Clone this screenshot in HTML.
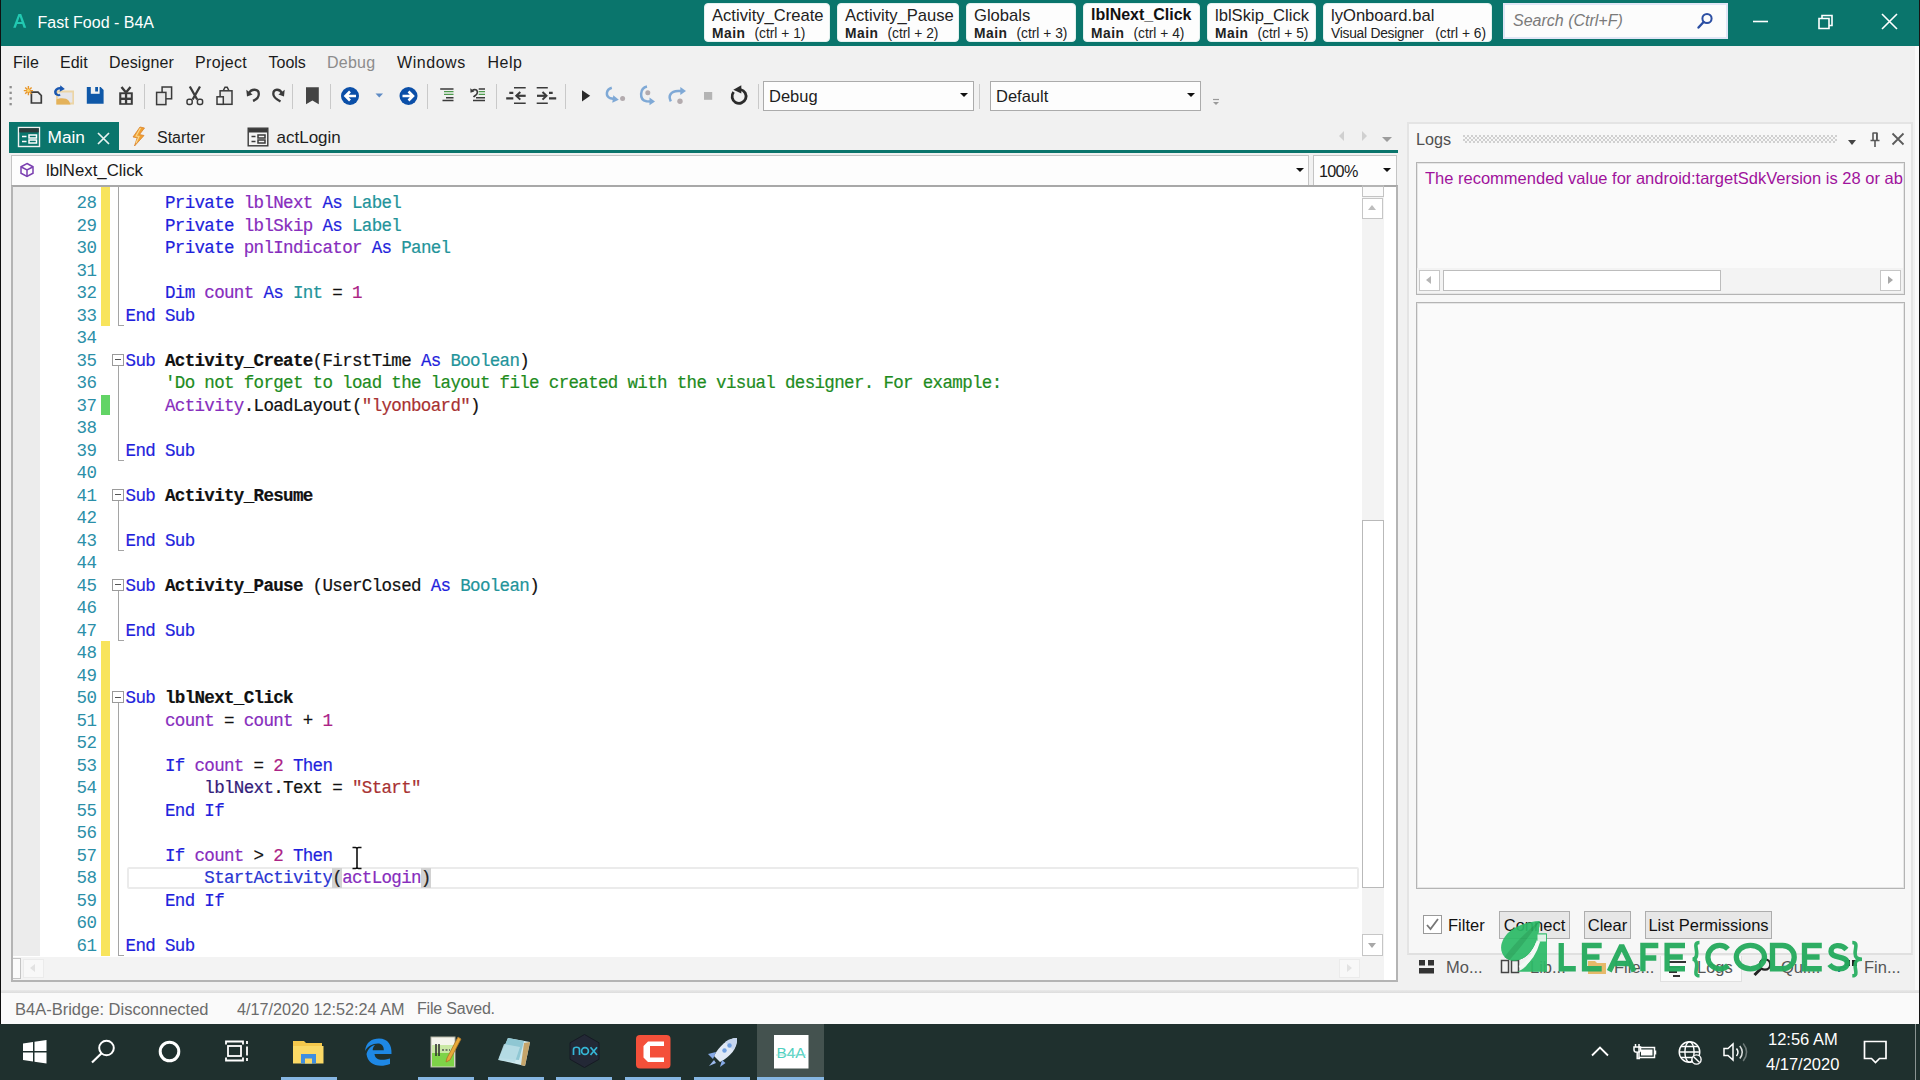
<!DOCTYPE html>
<html><head><meta charset="utf-8">
<style>
*{box-sizing:border-box;margin:0;padding:0}
html,body{width:1920px;height:1080px;overflow:hidden;background:#f1f1f1;font-family:"Liberation Sans",sans-serif;color:#1e1e1e}
.abs{position:absolute}
#win{position:absolute;left:0;top:0;width:1920px;height:1024px;background:#f1f1f1;overflow:hidden}
#title{position:absolute;left:0;top:0;width:1920px;height:46px;background:#0a756c}
#title .ttl{position:absolute;left:37.5px;top:13.5px;font-size:16px;color:#fff;white-space:nowrap}
.qt{position:absolute;top:3px;height:39px;background:#fdfdfd;border-radius:4px;border:1px solid #e4f1ef;white-space:nowrap;overflow:hidden}
.qt .a{position:absolute;left:7px;top:1.5px;font-size:16.6px;color:#222}
.qt .b{position:absolute;left:7px;top:21.5px;font-size:13.8px;color:#222}
.qt .b b{font-weight:bold;margin-right:9px;letter-spacing:0.5px}
.qt.sel .a{font-weight:bold;color:#111;font-size:16px}
#search{position:absolute;left:1503px;top:3px;width:225px;height:36px;background:#fcfcfc;border:2px solid #e1e6f6}
#search span{position:absolute;left:8px;top:7px;font-size:16px;font-style:italic;color:#7a7a7a;white-space:nowrap}
#menu span{position:absolute;top:53.5px;font-size:16px;color:#1b1b1b;white-space:nowrap}
.tb{position:absolute}
.tab{position:absolute;top:123px;height:20px;line-height:20px;font-size:16.5px;white-space:nowrap}
.combo{position:absolute;background:#fdfdfd;border:1px solid #ababab;font-size:16.5px;white-space:nowrap}
.arr{position:absolute;width:0;height:0;border-left:4px solid transparent;border-right:4px solid transparent;border-top:4.5px solid #111}
#code{-webkit-text-stroke:0.2px;position:absolute;left:125.6px;top:192.35px;font-family:"Liberation Mono",monospace;font-size:17.5px;letter-spacing:-0.66px;line-height:22.5px;white-space:pre;color:#111}
#code div{height:22.5px}
#lnum{position:absolute;left:40px;width:56.3px;top:192.35px;font-family:"Liberation Mono",monospace;font-size:17.5px;letter-spacing:-0.66px;line-height:22.5px;text-align:right;color:#2b8fa8}
#lnum div{height:22.5px}
.k{color:#1f1fdc}.t{color:#23949a}.v{color:#872dbd}.n{color:#ab2386}.s{color:#a83232}.c{color:#1e8c1e}.sb{font-weight:bold;color:#111}.d{color:#33207a}.k2{color:#2a36d2}.br{background:#d2d2d2;color:#222}
.fold{position:absolute;left:112px;width:12px;height:12px;border:1px solid #9a9a9a;background:#fff}
.fold:after{content:"";position:absolute;left:2px;top:4.5px;width:6px;height:1px;background:#555}
.fl{position:absolute;left:118px;width:1px;background:#a5a5a5}
.fh{position:absolute;left:118px;width:6px;height:1px;background:#a5a5a5}
.btn{position:absolute;top:910.5px;height:28px;border:1px solid #adadad;background:#e7e7e7;font-size:16.5px;white-space:nowrap;text-align:center;line-height:26.5px;color:#111}
#task{position:absolute;left:0;top:1024px;width:1920px;height:56px;background:#1f302e}
.ul{position:absolute;top:53px;height:3px;background:#86b6e2}
</style></head><body>
<div id="win">
<!-- TITLE -->
<div id="title">
 <svg class="abs" style="left:12px;top:13px" width="16" height="16" viewBox="0 0 16 16"><path d="M1.2 14.7 L6.4 1 L9.2 1 L14.2 14.7 L11.6 14.7 L10.3 10.9 L5.1 10.9 L3.8 14.7 Z M5.8 8.9 L9.6 8.9 L7.7 3.4 Z" fill="#22c9b2"/></svg>
 <div class="ttl">Fast Food - B4A</div>
 <div class="qt" style="left:704px;width:126px"><div class="a">Activity_Create</div><div class="b"><b>Main</b>(ctrl + 1)</div></div>
 <div class="qt" style="left:837px;width:122px"><div class="a">Activity_Pause</div><div class="b"><b>Main</b>(ctrl + 2)</div></div>
 <div class="qt" style="left:966px;width:110px"><div class="a">Globals</div><div class="b"><b>Main</b>(ctrl + 3)</div></div>
 <div class="qt sel" style="left:1083px;width:117px"><div class="a">lblNext_Click</div><div class="b"><b>Main</b>(ctrl + 4)</div></div>
 <div class="qt" style="left:1207px;width:109px"><div class="a">lblSkip_Click</div><div class="b"><b>Main</b>(ctrl + 5)</div></div>
 <div class="qt" style="left:1323px;width:169px"><div class="a">lyOnboard.bal</div><div class="b"><span style="letter-spacing:-0.25px">Visual Designer</span>&nbsp; &nbsp;(ctrl + 6)</div></div>
 <div id="search"><span>Search (Ctrl+F)</span>
  <svg class="abs" style="left:190px;top:6px" width="20" height="20" viewBox="0 0 20 20"><circle cx="12" cy="7.5" r="4.6" fill="none" stroke="#2c4fa3" stroke-width="2"/><path d="M8.6 11 L3.5 16.5" stroke="#2c4fa3" stroke-width="2.4" stroke-linecap="round"/></svg>
 </div>
 <svg class="abs" style="left:1740px;top:0" width="180" height="46" viewBox="0 0 180 46"><g stroke="#fff" stroke-width="1.6" fill="none"><path d="M13 21.5 H28"/><path d="M79 18.5 H89 V28.5 H79 Z"/><path d="M82 18.5 V15.5 H92 V25.5 H89"/><path d="M142 14 L157 29 M157 14 L142 29"/></g></svg>
</div>
<!-- MENU -->
<div id="menu">
 <span style="left:13px">File</span><span style="left:60px">Edit</span><span style="left:109px;letter-spacing:0.1px">Designer</span><span style="left:195px;letter-spacing:0.33px">Project</span><span style="left:268.500px">Tools</span><span style="left:327px;color:#8c8c8c;letter-spacing:0.25px">Debug</span><span style="left:397px;letter-spacing:0.55px">Windows</span><span style="left:487.500px;letter-spacing:0.5px">Help</span>
</div>
<div id="toolbar">
<svg class="abs" style="left:0;top:78px" width="1240" height="40" viewBox="0 78 1240 40">
 <g fill="#8f8f8f"><rect x="9.500" y="86" width="2.300" height="2.300"/><rect x="9.500" y="91.700" width="2.300" height="2.300"/><rect x="9.500" y="97.300" width="2.300" height="2.300"/><rect x="9.500" y="103" width="2.300" height="2.300"/></g>
 <g stroke="#c9c9c9" stroke-width="1"><path d="M144.5 84V109M292.5 84V109M330.5 84V109M427.5 84V109M496.5 84V109M565.5 84V109M758.5 84V109M979.5 84V109"/></g>
 <!-- new -->
 <path d="M31.400 92.200 H38 L41.300 95.500 V103 H31.400 Z" fill="#ebebeb" stroke="#3b3b3b" stroke-width="1.700"/>
 <g stroke="#e8962a" stroke-width="1.400"><path d="M28.400 86V95.200M23.800 90.600H33M25.200 87.400L31.600 93.800M31.600 87.400L25.200 93.800"/></g><circle cx="28.400" cy="90.600" r="1.500" fill="#ffd76a"/>
 <!-- open -->
 <rect x="56" y="90.500" width="18" height="14" fill="#ecd5a6"/><rect x="58" y="92.500" width="14.300" height="10" fill="#e6e6ea"/>
 <path d="M56.500 104.500 V99.500 C60 97.800 66.500 97.800 69 101 L70.500 104.500 Z" fill="#e4b25a"/>
 <path d="M56.300 94.500 C53.500 90.500 57.500 87.300 61.500 88.700" fill="none" stroke="#1a57b0" stroke-width="2.400"/><path d="M60.300 85.200 L64.800 88.900 L59.700 91.800 Z" fill="#1a57b0"/><path d="M56 93.500 C57 95.500 59 95.500 60 94.500" fill="none" stroke="#1a57b0" stroke-width="2"/>
 <!-- save -->
 <path d="M86.800 87 H100.600 L103.600 90 V103.700 H86.800 Z" fill="#0f58a8"/><rect x="90.800" y="87" width="8.800" height="6.800" fill="#f1f1f1"/><rect x="95.200" y="87" width="2.800" height="4.500" fill="#0f58a8"/>
 <!-- gift/module -->
 <rect x="119.200" y="92.300" width="13.600" height="12.500" fill="#3b3b3b"/>
 <g fill="#ececec"><rect x="121.300" y="94.200" width="3.600" height="3.400"/><rect x="127.200" y="94.200" width="3.600" height="3.400"/><rect x="121.300" y="100" width="3.600" height="3.200"/><rect x="127.200" y="100" width="3.600" height="3.200"/></g>
 <path d="M126 92.500 L121.500 87 M126 92.500 L130.500 87" stroke="#3b3b3b" stroke-width="2.400" fill="none"/>
 <!-- copy -->
 <rect x="162.100" y="87" width="9.500" height="11.800" fill="#ebebeb" stroke="#3b3b3b" stroke-width="1.500"/><rect x="156.600" y="92.400" width="9.300" height="12.200" fill="#e6e6e6" stroke="#3b3b3b" stroke-width="1.500"/>
 <!-- cut -->
 <g fill="none" stroke="#3b3b3b"><path d="M189.800 86.500 L197.200 99.500 M200 86.500 L192.600 99.500" stroke-width="2.300"/><rect x="187" y="99.300" width="5.200" height="5.200" rx="2" stroke-width="1.500"/><rect x="197.400" y="99.300" width="5.200" height="5.200" rx="2" stroke-width="1.500"/></g>
 <!-- paste -->
 <g fill="none" stroke="#3b3b3b" stroke-width="1.500"><path d="M223.300 90.500 L225 87.300 H227.200 L228.900 90.500"/><rect x="220.100" y="90.800" width="11.900" height="13.500" fill="#e8e8e8"/><rect x="217" y="96.800" width="6.300" height="7.500" fill="#f1f1f1"/></g>
 <!-- undo / redo -->
 <path d="M249 93.3 C251 88.600 258.800 88.300 258.800 94 C258.800 97.300 256.300 99.600 253 100.800" fill="none" stroke="#3b3b3b" stroke-width="2.3"/><path d="M246.300 89.800 L247 96.500 L252.600 94.600 Z" fill="#3b3b3b"/>
 <path d="M282 93.300 C280 88.600 273.300 88.300 273.300 94 C273.300 97.300 277 99.700 280.500 101.600" fill="none" stroke="#3b3b3b" stroke-width="2.3"/><path d="M284.700 89.800 L284 96.500 L278.400 94.600 Z" fill="#3b3b3b"/>
 <!-- bookmark -->
 <path d="M306 87.300 H318.800 V104.300 L312.400 100.600 L306 104.300 Z" fill="#444"/>
 <!-- back / fwd -->
 <circle cx="350" cy="96" r="9" fill="#0b4fa8"/><path d="M356 96 H346 M350 91.5 L345.5 96 L350 100.5" fill="none" stroke="#fff" stroke-width="2.6"/>
 <path d="M375.500 93.500 H383 L379.250 97.400 Z" fill="#5f8bc4"/>
 <circle cx="408.5" cy="96" r="9" fill="#0b4fa8"/><path d="M402.5 96 H412.5 M408.5 91.5 L413 96 L408.5 100.5" fill="none" stroke="#fff" stroke-width="2.6"/>
 <!-- indent lines icons -->
 <g stroke="#3b3b3b" stroke-width="1.500"><path d="M440.200 88.900H453.500M446 97.700H453.500M442.500 100.500H453.500"/></g>
 <g stroke="#4e9a4e" stroke-width="1.400"><path d="M444 91.600H453.500M444 94.400H453.500"/></g>
 <g stroke="#3b3b3b" stroke-width="1.500"><path d="M478.700 88.900H485M476 97.700H485M473 100.500H485"/></g>
 <g stroke="#4e9a4e" stroke-width="1.400"><path d="M478.700 91.600H485M478.700 94.400H485"/></g>
 <path d="M472 90.800 C474.500 88.500 477.800 89.800 477.300 92.800 C477 94.800 475 95.500 473.500 97" fill="none" stroke="#3b3b3b" stroke-width="1.600"/><path d="M470.300 88.300 L470.500 92.800 L474.300 91.600 Z" fill="#3b3b3b"/>
 <!-- outdent / indent -->
 <g stroke="#3b3b3b" fill="none"><path d="M514 87.800H525.700M514 103.200H525.700" stroke-width="1.600"/><path d="M509.300 92.800H513.300M506.200 98.300H513.300" stroke-width="2.200"/><path d="M516.500 95.800H525.700" stroke-width="2.200"/><path d="M520.300 92 L516.300 95.800 L520.300 99.600" stroke-width="2"/></g>
 <g stroke="#3b3b3b" fill="none"><path d="M536.700 87.800H547.800M536.700 103.200H547.800" stroke-width="1.600"/><path d="M549 92.800H552.700M549 98.300H556.200" stroke-width="2.200"/><path d="M537 95.800H546" stroke-width="2.200"/><path d="M542.500 92 L546.500 95.800 L542.500 99.600" stroke-width="2"/></g>
 <!-- play -->
 <path d="M582 90.200 L590.200 95.800 L582 101.400 Z" fill="#2a2a2a"/>
 <!-- step into/over/out -->
 <g fill="none" stroke="#7fa9d6" stroke-width="2.500"><path d="M611.800 87.800 C606 89.500 605 96 610.500 98.300 L614.500 99"/><path d="M647 86.600 C640 88 638.500 99.500 646.500 101.300 L651 101.500"/><path d="M670.800 101.300 C668 96 670.500 91.300 678 91 L682 91"/></g>
 <g fill="#7fa9d6"><path d="M613.300 95.300 L618.800 99.700 L612.300 102.700 Z"/><path d="M649.500 97.500 L655 101.600 L649.500 105.300 Z"/><path d="M680.300 87 L686 91 L680.300 95 Z"/></g>
 <g fill="#b3abae"><circle cx="622.600" cy="98.600" r="2.500"/><circle cx="647.800" cy="92.800" r="2.500"/><circle cx="680" cy="101.300" r="2.700"/></g>
 <rect x="704" y="92" width="8.200" height="7.800" fill="#b4b4b4"/>
 <!-- restart -->
 <path d="M740.500 89.500 A7 7 0 1 1 733.600 92" fill="none" stroke="#2b2b2b" stroke-width="2.800"/><path d="M733.300 89.700 L741.300 85.300 L741.300 93.600 Z" fill="#2b2b2b"/>
 <!-- overflow -->
 <path d="M1213 99.5 H1219" stroke="#9a9a9a" stroke-width="1.2"/><path d="M1213 102 H1219 L1216 105 Z" fill="#9a9a9a"/>
</svg>
<div class="combo" style="left:763px;top:81px;width:211px;height:30px"><span class="abs" style="left:5px;top:5px">Debug</span><div class="arr" style="left:196px;top:10.5px"></div></div>
<div class="combo" style="left:990px;top:81px;width:211px;height:30px"><span class="abs" style="left:5px;top:5px">Default</span><div class="arr" style="left:196px;top:10.5px"></div></div>

</div>
<div id="tabs">
<div class="abs" style="left:9px;top:122px;width:110px;height:29px;background:#0a756c"></div>
<div class="abs" style="left:9px;top:150px;width:1389px;height:3px;background:#0a756c"></div>
<svg class="abs" style="left:17px;top:126px" width="24" height="22" viewBox="0 0 24 22"><rect x="1.5" y="1.5" width="21" height="19" fill="#0a756c" stroke="#f2f2f2" stroke-width="1.4"/><rect x="2.2" y="2.2" width="19.6" height="4.2" fill="#2b3b3a"/><g stroke="#fff" stroke-width="1.5" fill="none"><path d="M5 10.5H9.5M5 15.5H9.5"/><rect x="12" y="9" width="7.5" height="3"/><rect x="12" y="14" width="7.5" height="3"/></g></svg>
<div class="tab" style="left:47.5px;color:#fff;top:127.3px;font-size:17.3px">Main</div>
<svg class="abs" style="left:96px;top:131px" width="15" height="15" viewBox="0 0 15 15"><path d="M2 2 L13 13 M13 2 L2 13" stroke="#e8f3f1" stroke-width="1.7"/></svg>
<svg class="abs" style="left:130px;top:126px" width="18" height="22" viewBox="0 0 18 22"><path d="M10 1 L14.5 2 L9.5 8.5 L14 9.5 L4.5 20 L7.2 11.8 L3 11 Z" fill="#f0a030" stroke="#d9822b" stroke-width="0.8"/><path d="M10.5 2 L6 10 L9 10.5 L6 17" fill="none" stroke="#f9d58a" stroke-width="1.2"/></svg>
<div class="tab" style="left:157px;top:127.8px;color:#1e1e1e;font-size:16px">Starter</div>
<svg class="abs" style="left:247px;top:127px" width="22" height="20" viewBox="0 0 22 20"><rect x="1.2" y="1.2" width="19.6" height="17.6" fill="#f4f4f4" stroke="#3a3a3a" stroke-width="1.4"/><rect x="1.5" y="1.5" width="19" height="4" fill="#3a3a3a"/><g stroke="#3a3a3a" stroke-width="1.5" fill="none"><path d="M4.5 9.5H8.5M4.5 14.5H8.5"/><rect x="11" y="8" width="7" height="3"/><rect x="11" y="13" width="7" height="3"/></g></svg>
<div class="tab" style="left:276.5px;top:127.5px;color:#1e1e1e;font-size:17px">actLogin</div>
<div class="abs" style="left:1339px;top:131.3px;width:0;height:0;border-top:5px solid transparent;border-bottom:5px solid transparent;border-right:5px solid #d0d0d0"></div>
<div class="abs" style="left:1362px;top:131.3px;width:0;height:0;border-top:5px solid transparent;border-bottom:5px solid transparent;border-left:5px solid #d0d0d0"></div>
<div class="abs" style="left:1382px;top:137px;width:0;height:0;border-left:5px solid transparent;border-right:5px solid transparent;border-top:5px solid #9c9c9c"></div>
<!-- sub combo -->
<div class="combo" style="left:11px;top:155px;width:1298px;height:31px;border-color:#c4c4c4;border-width:1px 1px 0 1px"></div>
<svg class="abs" style="left:19px;top:162px" width="16" height="16" viewBox="0 0 16 16"><g fill="none" stroke="#7a3fb0" stroke-width="1.5"><path d="M8 1.5 L14 4.8 V11.2 L8 14.5 L2 11.2 V4.8 Z"/><path d="M2.3 5 L8 8 L13.7 5 M8 8 V14.2"/></g></svg>
<div class="abs" style="left:46px;top:160.8px;font-size:16.8px;white-space:nowrap;color:#1a1a1a">lblNext_Click</div>
<div class="arr" style="left:1296px;top:167.5px"></div>
<div class="combo" style="left:1313px;top:155px;width:84px;height:31px;border-color:#c4c4c4;border-width:1px 1px 0 1px"></div>
<div class="abs" style="left:1319px;top:161.5px;font-size:16.2px;letter-spacing:-0.7px;white-space:nowrap;color:#1a1a1a">100%</div>
<div class="arr" style="left:1383px;top:167.5px"></div>

</div>
<div id="editor">
<div class="abs" style="left:11px;top:185px;width:1387px;height:797px;background:#fff;border:2px solid #b4b4b4;border-top-color:#a8a8a8"></div>
<div class="abs" style="left:13px;top:187px;width:27px;height:769px;background:#ececec"></div>
<div class="abs" style="left:100.7px;top:187px;width:9px;height:138.75px;background:#f8e45c"></div>
<div class="abs" style="left:100.7px;top:394.75px;width:9px;height:20.5px;background:#62d466"></div>
<div class="abs" style="left:100.7px;top:640.75px;width:9px;height:315.0px;background:#f8e45c"></div>
<div class="fl" style="top:187px;height:137.75px"></div><div class="fh" style="top:324.75px"></div>
<div class="fl" style="top:365.25px;height:94.5px"></div><div class="fold" style="top:353.75px"></div><div class="fh" style="top:459.75px"></div>
<div class="fl" style="top:500.25px;height:49.5px"></div><div class="fold" style="top:488.75px"></div><div class="fh" style="top:549.75px"></div>
<div class="fl" style="top:590.25px;height:49.5px"></div><div class="fold" style="top:578.75px"></div><div class="fh" style="top:639.75px"></div>
<div class="fl" style="top:702.75px;height:252.0px"></div><div class="fold" style="top:691.25px"></div><div class="fh" style="top:954.75px"></div>
<div class="abs" style="left:127px;top:867.0px;width:1232px;height:21.5px;border:2px solid #ebebeb;border-radius:2px"></div>
<div id="lnum"><div>28</div><div>29</div><div>30</div><div>31</div><div>32</div><div>33</div><div>34</div><div>35</div><div>36</div><div>37</div><div>38</div><div>39</div><div>40</div><div>41</div><div>42</div><div>43</div><div>44</div><div>45</div><div>46</div><div>47</div><div>48</div><div>49</div><div>50</div><div>51</div><div>52</div><div>53</div><div>54</div><div>55</div><div>56</div><div>57</div><div>58</div><div>59</div><div>60</div><div>61</div></div>
<div id="code"><div>    <span class="k">Private</span> <span class="v">lblNext</span> <span class="k">As</span> <span class="t">Label</span></div><div>    <span class="k">Private</span> <span class="v">lblSkip</span> <span class="k">As</span> <span class="t">Label</span></div><div>    <span class="k">Private</span> <span class="v">pnlIndicator</span> <span class="k">As</span> <span class="t">Panel</span></div><div></div><div>    <span class="k">Dim</span> <span class="v">count</span> <span class="k">As</span> <span class="t">Int</span> = <span class="n">1</span></div><div><span class="k">End Sub</span></div><div></div><div><span class="k">Sub</span> <span class="sb">Activity_Create</span>(FirstTime <span class="k">As</span> <span class="t">Boolean</span>)</div><div>    <span class="c">'Do not forget to load the layout file created with the visual designer. For example:</span></div><div>    <span class="v">Activity</span>.LoadLayout(<span class="s">"lyonboard"</span>)</div><div></div><div><span class="k">End Sub</span></div><div></div><div><span class="k">Sub</span> <span class="sb">Activity_Resume</span></div><div></div><div><span class="k">End Sub</span></div><div></div><div><span class="k">Sub</span> <span class="sb">Activity_Pause</span> (UserClosed <span class="k">As</span> <span class="t">Boolean</span>)</div><div></div><div><span class="k">End Sub</span></div><div></div><div></div><div><span class="k">Sub</span> <span class="sb">lblNext_Click</span></div><div>    <span class="v">count</span> = <span class="v">count</span> + <span class="n">1</span></div><div></div><div>    <span class="k">If</span> <span class="v">count</span> = <span class="n">2</span> <span class="k">Then</span></div><div>        <span class="d">lblNext</span>.Text = <span class="s">"Start"</span></div><div>    <span class="k">End If</span></div><div></div><div>    <span class="k">If</span> <span class="v">count</span> &gt; <span class="n">2</span> <span class="k">Then</span></div><div>        <span class="k2">StartActivity</span><span class="br">(</span><span class="v">actLogin</span><span class="br">)</span></div><div>    <span class="k">End If</span></div><div></div><div><span class="k">End Sub</span></div></div>
<svg class="abs" style="left:350px;top:846px" width="14" height="24" viewBox="0 0 14 24"><path d="M2.5 1.5 H5.5 Q7 1.5 7 3 Q7 1.5 8.5 1.5 H11.5 M7 2.5 V21.5 M2.5 22.5 H5.5 Q7 22.5 7 21 Q7 22.5 8.5 22.5 H11.5" fill="none" stroke="#111" stroke-width="1.6"/></svg>
<div class="abs" style="left:1362px;top:187px;width:22px;height:770px;background:#f3f3f3"></div>
<div class="abs" style="left:1362px;top:185px;width:22px;height:12px;background:#fbfbfb;border:1px solid #c4c4c4;border-top:2px solid #b5b5b5"></div>
<div class="abs" style="left:1362px;top:198px;width:21px;height:21px;background:#fff;border:1px solid #c6c6c6"></div><div class="abs" style="left:1368px;top:205px;width:0;height:0;border-left:4.5px solid transparent;border-right:4.5px solid transparent;border-bottom:5px solid #bdbdbd"></div>
<div class="abs" style="left:1362px;top:934px;width:21px;height:22px;background:#fff;border:1px solid #c6c6c6"></div><div class="abs" style="left:1368px;top:943px;width:0;height:0;border-left:4.5px solid transparent;border-right:4.5px solid transparent;border-top:5px solid #a8a8a8"></div>
<div class="abs" style="left:1362px;top:520px;width:22px;height:368px;background:#fff;border:1px solid #b9b9b9"></div>
<div class="abs" style="left:13px;top:957px;width:1371px;height:23px;background:#f3f3f3"></div>
<div class="abs" style="left:13px;top:958px;width:8px;height:21px;background:#fbfbfb;border:1px solid #c4c4c4;border-left:none"></div>
<div class="abs" style="left:23px;top:959px;width:21px;height:19px;background:#f8f8f8;border:1px solid #ebebeb"></div><div class="abs" style="left:30px;top:964px;width:0;height:0;border-top:4.5px solid transparent;border-bottom:4.5px solid transparent;border-right:5px solid #e2e2e2"></div>
<div class="abs" style="left:1339px;top:959px;width:21px;height:19px;background:#f8f8f8;border:1px solid #ebebeb"></div><div class="abs" style="left:1347px;top:964px;width:0;height:0;border-top:4.5px solid transparent;border-bottom:4.5px solid transparent;border-left:5px solid #e2e2e2"></div>
</div>
<div id="logs">
<div class="abs" style="left:1407px;top:122px;width:506px;height:833px;background:#f7f7f7;border:2px solid #e4e4e4;border-bottom-color:#e0e0e0"></div>
<div class="abs" style="left:1416px;top:129.7px;font-size:16.2px;color:#505050;white-space:nowrap">Logs</div>
<div class="abs" style="left:1463px;top:135px;width:374px;height:8px;background-image:radial-gradient(circle at 1px 1px,#d0d0d0 0.8px,transparent 1.1px),radial-gradient(circle at 3px 3px,#d0d0d0 0.8px,transparent 1.1px);background-size:4px 4px"></div>
<div class="abs" style="left:1848px;top:139.5px;width:0;height:0;border-left:4.8px solid transparent;border-right:4.8px solid transparent;border-top:5px solid #444"></div>
<svg class="abs" style="left:1868px;top:131px" width="14" height="18" viewBox="0 0 14 18"><path d="M4.5 2 H9.5 M5 2 V9 M9 2 V9 M2.5 9.5 H11.5 M7 9.5 V16" stroke="#585858" stroke-width="1.6" fill="none"/><path d="M8 2V9H9.5V2Z" fill="#585858"/></svg>
<svg class="abs" style="left:1890px;top:131px" width="16" height="16" viewBox="0 0 16 16"><path d="M2.5 2.5 L13.5 13.5 M13.5 2.5 L2.5 13.5" stroke="#5c5c5c" stroke-width="1.8"/></svg>
<!-- top log box -->
<div class="abs" style="left:1415.5px;top:162px;width:489.5px;height:133px;background:#fafafa;border:1px solid #b4b4b4;box-shadow:inset 0 0 0 1px #e6e6e6"></div>
<div class="abs" style="left:1425px;top:168.6px;width:478px;overflow:hidden;font-size:16.5px;color:#a0129c;white-space:nowrap">The recommended value for android:targetSdkVersion is 28 or above</div>
<div class="abs" style="left:1417px;top:268px;width:486px;height:25px;background:#f3f3f3"></div>
<div class="abs" style="left:1419px;top:270px;width:21px;height:21px;background:#fff;border:1px solid #c6c6c6"></div><div class="abs" style="left:1426px;top:276px;width:0;height:0;border-top:4.5px solid transparent;border-bottom:4.5px solid transparent;border-right:5px solid #b5b5b5"></div>
<div class="abs" style="left:1443px;top:270px;width:278px;height:21px;background:#fff;border:1px solid #bcbcbc"></div>
<div class="abs" style="left:1880px;top:270px;width:21px;height:21px;background:#fff;border:1px solid #c6c6c6"></div><div class="abs" style="left:1888px;top:276px;width:0;height:0;border-top:4.5px solid transparent;border-bottom:4.5px solid transparent;border-left:5px solid #a8a8a8"></div>
<!-- bottom log box -->
<div class="abs" style="left:1415.5px;top:302px;width:489.5px;height:587px;background:#fafafa;border:1px solid #b4b4b4;box-shadow:inset 0 0 0 1px #e6e6e6"></div>
<!-- controls -->
<div class="abs" style="left:1423px;top:915px;width:19px;height:19px;background:#fff;border:1px solid #9a9a9a"></div>
<svg class="abs" style="left:1424px;top:916px" width="17" height="17" viewBox="0 0 17 17"><path d="M3 9 L6.5 13 L14 3" fill="none" stroke="#777" stroke-width="1.8"/></svg>
<div class="abs" style="left:1448px;top:915.7px;font-size:16.5px;white-space:nowrap;color:#111">Filter</div>
<div class="btn" style="left:1499px;width:71px">Connect</div>
<div class="btn" style="left:1584px;width:47px">Clear</div>
<div class="btn" style="left:1645px;width:127px">List Permissions</div>
<!-- bottom tabs -->
<div class="abs" style="left:1660px;top:956px;width:82px;height:26px;background:#fafafa;border:1px solid #e0e0e0;border-top:none"></div>
<svg class="abs" style="left:1418px;top:959px" width="18" height="16" viewBox="0 0 18 16"><g fill="#333"><rect x="1" y="1" width="6" height="5.5"/><rect x="10" y="1" width="6" height="5.5"/><rect x="1" y="9" width="15" height="5.5"/></g></svg>
<div class="abs" style="left:1446px;top:958.3px;font-size:16.5px;color:#555;white-space:nowrap">Mo...</div>
<svg class="abs" style="left:1500px;top:958px" width="22" height="18" viewBox="0 0 22 18"><g fill="none" stroke="#444" stroke-width="1.5"><rect x="1.5" y="2.5" width="7" height="12"/><rect x="11.5" y="2.5" width="7" height="12"/></g></svg>
<div class="abs" style="left:1530px;top:958.3px;font-size:16.5px;color:#555;white-space:nowrap">Lib...</div>
<svg class="abs" style="left:1586px;top:958px" width="22" height="18" viewBox="0 0 22 18"><path d="M2 3 H9 L11 5 H20 V16 H2 Z" fill="#e6b96a"/></svg>
<div class="abs" style="left:1614px;top:958.3px;font-size:16.5px;color:#555;white-space:nowrap">File...</div>
<svg class="abs" style="left:1667px;top:959px" width="22" height="18" viewBox="0 0 22 18"><g stroke="#333" stroke-width="1.8"><path d="M2 3H19M2 8H13M2 13H10M6 17H13"/></g></svg>
<div class="abs" style="left:1697px;top:958.3px;font-size:16.5px;color:#555;white-space:nowrap">Logs</div>
<svg class="abs" style="left:1752px;top:957px" width="22" height="20" viewBox="0 0 22 20"><circle cx="13" cy="7.5" r="5.2" fill="none" stroke="#222" stroke-width="2.2"/><path d="M9 11.5 L2.5 18" stroke="#222" stroke-width="3"/></svg>
<div class="abs" style="left:1781px;top:958.3px;font-size:16.5px;color:#555;white-space:nowrap">Qui...</div>
<svg class="abs" style="left:1836px;top:957px" width="24" height="20" viewBox="0 0 24 20"><path d="M3 15 C3 10 7 9 10 11" fill="none" stroke="#2463b8" stroke-width="2"/><rect x="9" y="3" width="5" height="6" fill="#222"/><rect x="16" y="3" width="5" height="6" fill="#222"/></svg>
<div class="abs" style="left:1864px;top:958.3px;font-size:16.5px;color:#555;white-space:nowrap">Fin...</div>
<!-- watermark -->
<svg class="abs" style="left:1496px;top:916px" width="376" height="70" viewBox="1496 916 376 70">
 <g opacity="0.93">
 <path d="M1539.5 921 C1522 922 1505 930 1501.5 944 C1499.5 953 1505 960.500 1514 960.500 C1524 960.500 1531 953 1535 944 C1538 936 1539.500 928 1539.500 921 Z" fill="#2dbb68"/>
 <path d="M1539.500 921 C1530 928 1514 944 1504.500 957 C1507 959.500 1510 960.500 1514 960.500 C1524 960.500 1531 953 1535 944 C1538 936 1539.500 928 1539.500 921 Z" fill="#25a85a"/>
 <path d="M1539.500 921 C1534 930 1522 946 1509.500 960 C1511 960.400 1512.500 960.500 1514 960.500 C1524 960.500 1531 953 1535 944 C1538 936 1539.500 928 1539.500 921 Z" fill="#2dbb68"/>
 <path d="M1536.500 933.500 H1547 V971.700 H1517 C1527 969 1533 958 1536.500 943 Z" fill="#2dbb68"/>
 <path d="M1537 934 H1546.500 V942 H1537 Z" fill="#dff3e6" stroke="#2dbb68" stroke-width="1"/>
 <path d="M1538.500 941 C1535 953 1530 962 1519.500 967.500" fill="none" stroke="#f4faf6" stroke-width="3.600"/>
 </g>
 <g fill="none" stroke="#26ab5e" stroke-width="5.3" opacity="0.96">
  <path d="M1561.250 943 V968.750 H1575.800"/>
  <path d="M1601.700 945.500 H1584.500 V968.750 H1601.700 M1584.500 957 H1599.500"/>
  <path d="M1609.300 971.250 L1621.700 945.500 L1634.100 971.250 M1613.500 963.500 H1630" stroke-linejoin="bevel"/>
  <path d="M1658.300 945.500 H1642.900 V971.250 M1642.900 958 H1656.300"/>
  <path d="M1685 945.500 H1667.100 V968.750 H1685 M1667.100 957 H1682.800"/>
  <path d="M1728 949 A11.700 11.700 0 1 0 1728 965.300"/>
  <ellipse cx="1750.400" cy="957.100" rx="14.100" ry="11.700"/>
  <path d="M1772.500 945.500 H1782.600 A11.600 11.600 0 0 1 1782.600 968.750 H1772.500 Z"/>
  <path d="M1821.800 945.500 H1804.500 V968.750 H1821.800 M1804.500 957 H1819.600"/>
  <path d="M1846.500 949.500 C1842 944.300 1831 944 1831 951.300 C1831 959.500 1847.200 954.800 1847.200 963 C1847.200 970.800 1834 970.500 1829.500 964.500"/>
 </g>
 <g fill="none" stroke="#27ae60" stroke-width="3.600" opacity="0.95">
  <path d="M1699.500 942.500 C1693.500 942.500 1696.700 948 1696.700 953 C1696.700 957 1695.500 959.200 1692.500 959.200 C1695.500 959.200 1696.700 961.500 1696.700 965.500 C1696.700 970.500 1693.500 975.800 1699.500 975.800"/>
  <path d="M1852.300 942.500 C1858.300 942.500 1855.100 948 1855.100 953 C1855.100 957 1856.300 959.200 1862 959.200 C1856.300 959.200 1855.100 961.500 1855.100 965.500 C1855.100 970.500 1858.300 975.800 1852.300 975.800"/>
 </g>
</svg>

</div>
<div id="status">
<div class="abs" style="left:0;top:990px;width:1920px;height:3px;background:linear-gradient(#e9e9e9,#dcdcdc)"></div>
<div class="abs" style="left:0;top:993px;width:1920px;height:31px;background:#fafafa"></div>
<div class="abs" style="left:15px;top:999.8px;font-size:16.5px;color:#6b6b6b;white-space:nowrap">B4A-Bridge: Disconnected</div>
<div class="abs" style="left:237px;top:999.8px;font-size:16.2px;color:#6b6b6b;white-space:nowrap">4/17/2020 12:52:24 AM</div>
<div class="abs" style="left:417px;top:999.8px;font-size:16px;letter-spacing:-0.2px;color:#6b6b6b;white-space:nowrap">File Saved.</div>
<div class="abs" style="left:0;top:0;width:1px;height:1024px;background:#101010"></div>
<div class="abs" style="left:1915px;top:46px;width:4px;height:944px;background:#fafafa"></div><div class="abs" style="left:1919px;top:0;width:1px;height:1024px;background:#151515"></div>

</div>
</div>
<div id="task">
<div class="abs" style="left:757px;top:0;width:67px;height:56px;background:#44524f"></div>
<div class="ul" style="left:281px;width:56px"></div><div class="ul" style="left:418px;width:56px"></div><div class="ul" style="left:488px;width:56px"></div><div class="ul" style="left:556px;width:56px"></div><div class="ul" style="left:625px;width:56px"></div><div class="ul" style="left:694px;width:56px"></div><div class="ul" style="left:757px;width:67px"></div>
<svg class="abs" style="left:0;top:0" width="1920" height="56" viewBox="0 1024 1920 56">
 <!-- windows -->
 <g fill="#fff"><path d="M23 1043.5 L33 1042 V1051 H23 Z"/><path d="M34.5 1041.8 L46.5 1040 V1051 H34.5 Z"/><path d="M23 1052.5 H33 V1061.5 L23 1060 Z"/><path d="M34.5 1052.5 H46.5 V1063.5 L34.5 1061.7 Z"/></g>
 <!-- search -->
 <circle cx="106.5" cy="1048" r="7.3" fill="none" stroke="#fff" stroke-width="2"/><path d="M101.3 1053.5 L92 1062.5" stroke="#fff" stroke-width="2.2"/>
 <!-- cortana -->
 <circle cx="169.5" cy="1051.5" r="9.3" fill="none" stroke="#fff" stroke-width="3"/>
 <!-- task view -->
 <g fill="none" stroke="#fff" stroke-width="1.8"><rect x="228" y="1046" width="13" height="10"/><path d="M226 1044.5 V1041.5 H243 V1044.5 M226 1057.5 V1060.5 H243 V1057.5 M247 1041 V1044 M247 1046.5 V1055.5 M247 1058 V1061"/></g>
 <!-- explorer -->
 <path d="M293 1041 H304 L306 1043 H322 V1063 H293 Z" fill="#f5c84c"/><path d="M293 1046 H323.5 V1063.5 H293 Z" fill="#fbd966"/><path d="M301 1054 H316 V1063.5 H301 Z" fill="#3f8ee0"/><rect x="305" y="1058.5" width="7" height="5" fill="#fbd966"/>
 <!-- edge -->
 <path d="M365 1051 C366 1042 372 1038.5 379 1038.5 C388 1038.5 392 1045 391.5 1054 H374.5 C375 1059 380 1061.5 390 1058.5 V1064 C378 1068.5 367.5 1064 366.5 1054 C368 1048 372 1045.5 375 1045 C373 1047 372.5 1049 372.8 1050.2 H383.8 C383.8 1046 381.5 1043.6 378 1043.6 C372 1043.6 368 1046.5 365 1051 Z" fill="#1e88e5"/>
 <!-- notepad++ -->
 <rect x="431" y="1037" width="24" height="30" fill="#f4f4ec" stroke="#b5b5a5" stroke-width="1"/><rect x="432" y="1051" width="22" height="15.5" fill="#7ed348"/><rect x="432" y="1045" width="22" height="8" fill="#c9e8a4"/><path d="M436 1044 V1056 M439 1044 V1056" stroke="#333" stroke-width="1.6"/><path d="M442 1050 H450" stroke="#555" stroke-width="1.4" stroke-dasharray="2 1.5"/><path d="M447 1058 L458 1037 L461 1039 L450 1060 L446 1062 Z" fill="#e7a93a" stroke="#a9742a" stroke-width="0.8"/>
 <!-- notepad -->
 <path d="M508 1038 L530 1042 L525 1066 L499 1060 Z" fill="#cfe9ee"/><path d="M508 1038 L524 1041 L519 1060 L499 1058 Z" fill="#8fc7d3"/><path d="M504 1044 L520 1047 L515 1062 L498 1060 Z" fill="#b8dde6" opacity="0.9"/><path d="M524 1043 L530 1042 L525 1066 L521 1065 Z" fill="#c5a46a"/>
 <!-- nox -->
 <path d="M584.5 1034.5 L599 1042.8 V1059.3 L584.5 1067.5 L570 1059.3 V1042.8 Z" fill="#232836" stroke="#161a24" stroke-width="1"/>
 <g fill="none" stroke="#35b6d6" stroke-width="1.7"><path d="M573.5 1055 V1049.5 C573.5 1046.5 579.5 1046.5 579.5 1049.5 V1055"/><circle cx="585" cy="1051" r="3.4"/><path d="M590.5 1047.3 L597 1055 M597 1047.3 L590.5 1055"/></g>
 <!-- camtasia -->
 <rect x="636" y="1035" width="34.5" height="33.5" rx="4" fill="#f4503a"/><path d="M664 1041.5 H648 L643.5 1046 V1057.5 L648 1062 H664 V1057.5 H650 V1046 H664 Z" fill="#fff"/>
 <!-- rocket -->
 <path d="M737 1038 C728 1038 719 1046 714 1056 L720 1062 C730 1057 738 1048 737 1038 Z" fill="#dfe8f5"/><path d="M737 1038 C732 1038 728 1040 725 1042 L733 1050 C736 1046 737.5 1042 737 1038 Z" fill="#c7d6ef"/><circle cx="729.5" cy="1045.5" r="2.2" fill="#6f9fe0"/><circle cx="724.5" cy="1050.5" r="2.2" fill="#6f9fe0"/><path d="M716 1052 L708 1054 L713 1059 Z M722 1060 L720 1067 L725.5 1063 Z" fill="#86a9e6"/><path d="M714 1060 L709 1066 L716 1063 Z" fill="#9db9ec"/>
 <!-- b4a -->
 <rect x="774" y="1035" width="34.5" height="33.5" fill="#fff"/><text x="776.5" y="1058" font-family="Liberation Sans, sans-serif" font-size="14" fill="#4fd0c0" textLength="29" lengthAdjust="spacingAndGlyphs">B4A</text><path d="M776 1055 H806" stroke="#8fe0d6" stroke-width="0.8"/>
 <!-- tray -->
 <path d="M1592 1055.5 L1600 1047.5 L1608 1055.5" fill="none" stroke="#fff" stroke-width="1.8"/>
 <g fill="none" stroke="#fff" stroke-width="1.5"><rect x="1639" y="1047.5" width="15.5" height="10"/><path d="M1655.5 1050.5 V1054.5"/><path d="M1635.5 1044 V1047 M1639 1044 V1047"/><path d="M1634 1047 H1640.5 V1050 C1640.500 1053 1634 1053 1634 1050 Z M1637.2 1052.500 V1058.500 H1640"/></g><rect x="1641" y="1049.500" width="11.5" height="6" fill="#fff"/>
 <g fill="none" stroke="#fff" stroke-width="1.4"><circle cx="1689.5" cy="1052" r="10.300"/><ellipse cx="1689.5" cy="1052" rx="4.600" ry="10.300"/><path d="M1679.500 1052 H1699.500 M1681 1046.500 H1698 M1681 1057.500 H1692"/></g><circle cx="1696.500" cy="1059.500" r="4.600" fill="#1f302e" stroke="#fff" stroke-width="1.4"/><path d="M1693.400 1056.400 L1699.600 1062.600" stroke="#fff" stroke-width="1.4"/>
 <g fill="none" stroke="#fff" stroke-width="1.500"><path d="M1724 1048.500 H1728 L1733 1044 V1060 L1728 1055.500 H1724 Z"/><path d="M1736.500 1048.500 C1738.500 1051 1738.500 1053.500 1736.500 1056"/><path d="M1739.800 1046 C1743 1050 1743 1054.500 1739.800 1058.500" opacity="0.85"/><path d="M1743.200 1043.500 C1747.500 1049 1747.500 1055.500 1743.200 1061" opacity="0.35"/></g>
 <path d="M1864.500 1041.500 H1886 V1058.500 H1879.500 L1875.500 1062.500 L1871.500 1058.500 H1864.500 Z" fill="none" stroke="#fff" stroke-width="1.700"/>
 <path d="M1915.500 1024 V1080" stroke="#8a9392" stroke-width="1"/>
</svg>
<div class="abs" style="left:1768px;top:6px;width:68px;text-align:center;font-size:16.5px;color:#fff;white-space:nowrap">12:56 AM</div>
<div class="abs" style="left:1766px;top:31px;width:73px;text-align:center;font-size:16.5px;color:#fff;white-space:nowrap">4/17/2020</div>

</div>
</body></html>
